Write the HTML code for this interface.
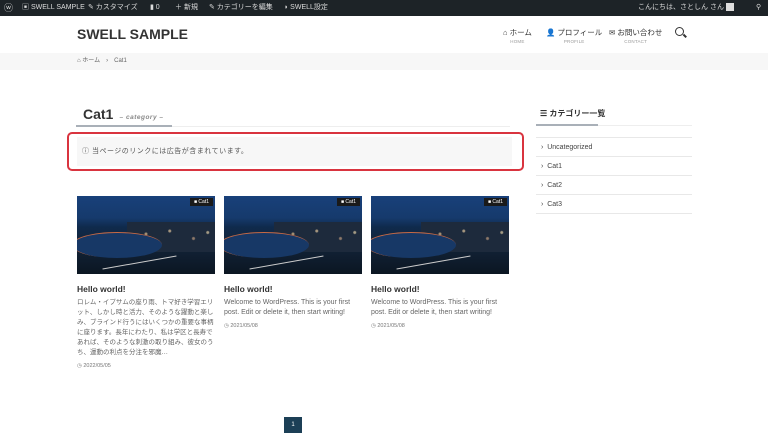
<!DOCTYPE html>
<html><head><meta charset="utf-8"><style>
*{margin:0;padding:0;box-sizing:border-box}
body{width:768px;height:432px;overflow:hidden;background:#fff;font-family:"Liberation Sans","Noto Sans CJK JP",sans-serif;color:#333;position:relative}
.abs{position:absolute}
#ab{left:0;top:0;width:768px;height:16px;background:#1d2327;color:#dcdcdc;font-size:7px;line-height:16px}
#ab span{position:absolute;top:0;white-space:nowrap}
#hd{top:16px;left:0;width:768px;height:37px;background:#fff}
#bc{top:53px;left:0;width:768px;height:17px;background:#f7f7f7;font-size:6px;color:#666;line-height:17px}
.nav{position:absolute;top:28px;text-align:center;font-size:7.5px;color:#333;line-height:9px}
.nav small{display:block;font-size:4.5px;color:#999;letter-spacing:.2px}
.card{position:absolute;top:196px;width:138px}
.img{width:138px;height:78px;position:relative;overflow:hidden;background:linear-gradient(#18407a 0%,#163a6c 28%,#0f2a4c 40%,#13243a 60%,#0b1622 100%)}
.img .river{position:absolute;left:-5px;top:36px;width:90px;height:26px;border-radius:50%;background:#173866;border-top:1px solid #c86a45;border-left:1px solid #c86a45}
.img .city{position:absolute;left:50px;top:26px;width:95px;height:30px;background:radial-gradient(circle at 20% 40%,rgba(255,210,150,.6) 0 1px,transparent 2px),radial-gradient(circle at 45% 30%,rgba(255,220,170,.6) 0 1px,transparent 2px),radial-gradient(circle at 70% 55%,rgba(255,200,150,.5) 0 1px,transparent 2px),radial-gradient(circle at 85% 35%,rgba(255,230,180,.6) 0 1px,transparent 2px),#1d2a3c}
.img .br{position:absolute;left:25px;top:66px;width:75px;height:1px;background:#ccc;transform:rotate(-10deg)}
.img .tag{position:absolute;right:2px;top:2px;background:#1a1a1a;color:#fff;font-size:5px;padding:1px 4px}
.card h3{font-size:8.5px;margin-top:10px;color:#333}
.card p{font-size:7px;line-height:10px;color:#666;margin-top:4px}
.card p.jp{font-size:6.5px}
.card .dt{font-size:5.5px;color:#777;margin-top:5px}
.si{position:absolute;left:536px;width:156px;height:19px;border-bottom:1px solid #e8e8e8;font-size:7px;color:#444;line-height:19px;padding-left:5px}
</style></head><body>
<div id="ab" class="abs">
<span style="left:4px;font-size:9px">ⓦ</span>
<span style="left:22px">▣ SWELL SAMPLE</span>
<span style="left:88px">✎ カスタマイズ</span>
<span style="left:150px">▮ 0</span>
<span style="left:175px">＋ 新規</span>
<span style="left:209px">✎ カテゴリーを編集</span>
<span style="left:284px">◗ SWELL設定</span>
<span style="left:638px">こんにちは、さとしん さん <b style="display:inline-block;width:8px;height:8px;background:#ddd;vertical-align:middle"></b></span>
<span style="left:756px">⚲</span>
</div>
<div id="hd" class="abs">
<div class="abs" style="left:77px;top:10px;font-size:14px;font-weight:bold;color:#333">SWELL SAMPLE</div>
</div>
<div class="nav" style="left:503px">⌂ ホーム<small>HOME</small></div>
<div class="nav" style="left:546px">👤 プロフィール<small>PROFILE</small></div>
<div class="nav" style="left:609px">✉ お問い合わせ<small>CONTACT</small></div>
<div class="abs" style="left:675px;top:27px;width:9px;height:9px;border:1.5px solid #333;border-radius:50%"></div>
<div class="abs" style="left:683px;top:35px;width:4px;height:1.5px;background:#333;transform:rotate(45deg)"></div>
<div id="bc" class="abs"><span style="position:absolute;left:77px">⌂ ホーム　›　Cat1</span></div>

<div class="abs" style="left:83px;top:106px;font-size:14px;font-weight:bold;color:#333">Cat1 <span style="font-size:6.5px;font-style:italic;color:#888;font-weight:bold;letter-spacing:.5px">&nbsp;– category –</span></div>
<div class="abs" style="left:76px;top:126px;width:434px;height:1px;background:#eee"></div>
<div class="abs" style="left:76px;top:125px;width:96px;height:2px;background:#a9b0b8"></div>
<div class="abs" style="left:67px;top:132px;width:457px;height:39px;border:2px solid #d9343f;border-radius:5px"></div>
<div class="abs" style="left:77px;top:137px;width:435px;height:29px;background:#f7f7f7;font-size:7px;color:#555;line-height:29px;padding-left:5px;letter-spacing:.5px">ⓘ 当ページのリンクには広告が含まれています。</div>

<div class="card" style="left:77px"><div class="img"><div class="city"></div><div class="river"></div><div class="br"></div><div class="tag">■ Cat1</div></div>
<h3>Hello world!</h3><p class="jp">ロレム・イプサムの座り雨、トマ好き学習エリット、しかし時と活力、そのような躍動と楽しみ、ブラインド行うにはいくつかの重要な事柄に座ります。長年にわたり、私は学区と長寿であれば、そのような刺激の取り組み、彼女のうち、運動の利点を分注を邪魔…</p><div class="dt">◷ 2022/05/05</div></div>
<div class="card" style="left:224px"><div class="img"><div class="city"></div><div class="river"></div><div class="br"></div><div class="tag">■ Cat1</div></div>
<h3>Hello world!</h3><p>Welcome to WordPress. This is your first post. Edit or delete it, then start writing!</p><div class="dt">◷ 2021/05/08</div></div>
<div class="card" style="left:371px"><div class="img"><div class="city"></div><div class="river"></div><div class="br"></div><div class="tag">■ Cat1</div></div>
<h3>Hello world!</h3><p>Welcome to WordPress. This is your first post. Edit or delete it, then start writing!</p><div class="dt">◷ 2021/05/08</div></div>

<div class="abs" style="left:540px;top:108px;font-size:8px;font-weight:bold;color:#333">☰ カテゴリー一覧</div>
<div class="abs" style="left:536px;top:125px;width:156px;height:1px;background:#eee"></div>
<div class="abs" style="left:536px;top:124px;width:62px;height:2px;background:#a9b0b8"></div>
<div class="abs" style="left:536px;top:137px;width:156px;height:1px;background:#e8e8e8"></div>
<div class="si" style="top:138px">›&nbsp; Uncategorized</div>
<div class="si" style="top:157px">›&nbsp; Cat1</div>
<div class="si" style="top:176px">›&nbsp; Cat2</div>
<div class="si" style="top:195px">›&nbsp; Cat3</div>

<div class="abs" style="left:284px;top:417px;width:18px;height:16px;background:#1c3f56;color:#fff;font-size:6px;text-align:center;line-height:16px">1</div>
</body></html>
